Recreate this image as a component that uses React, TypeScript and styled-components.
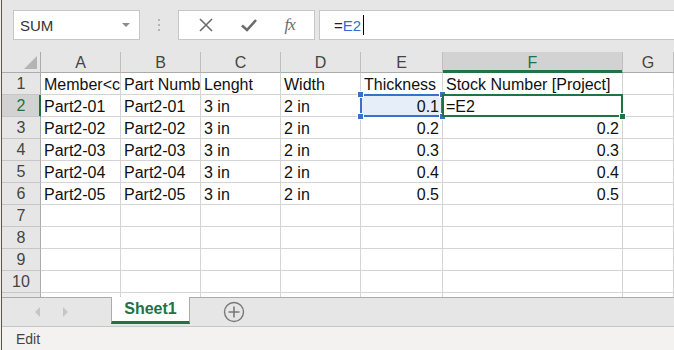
import styled, { createGlobalStyle } from "styled-components";

const GlobalStyle = createGlobalStyle`
  html, body {
    margin: 0;
    padding: 0;
    background: #e6e6e6;
  }
  body {
    font-family: "Liberation Sans", Arial, sans-serif;
  }
`;

const green = "#217346";
const blue = "#3871c9";

const StyledPage = styled.div`
  width: 674px;
  height: 350px;
  overflow: hidden;
  display: flex;
  flex-direction: column;
  background: #e6e6e6;
  border-left: 1px solid #f0f0f0;
  box-sizing: border-box;
`;
const StyledFrame = styled.div`
  flex: 1;
  display: flex;
  flex-direction: column;
  border-left: 1px solid ${green};
  min-height: 0;
`;
const StyledToolbar = styled.div`
  height: 52px;
  flex: none;
  display: flex;
  align-items: flex-start;
  padding: 10px 0 0 11px;
  box-sizing: border-box;
`;
const StyledNameBox = styled.div`
  width: 127px;
  height: 30px;
  box-sizing: border-box;
  background: #fff;
  border: 1px solid #c6c6c6;
  display: flex;
  align-items: center;
  justify-content: space-between;
  padding: 0 9px 0 6px;
  font-size: 15px;
  color: #333;
`;
const StyledCaret = styled.span`
  width: 0;
  height: 0;
  border-left: 4px solid transparent;
  border-right: 4px solid transparent;
  border-top: 4px solid #8a8a8a;
`;
const StyledDots = styled.div`
  width: 38px;
  height: 30px;
  display: flex;
  flex-direction: column;
  align-items: center;
  justify-content: center;
  gap: 3px;
  span {
    width: 2px;
    height: 2px;
    background: #b4b4b4;
  }
`;
const StyledButtons = styled.div`
  width: 137px;
  height: 30px;
  box-sizing: border-box;
  background: #fff;
  border: 1px solid #c6c6c6;
  display: flex;
  align-items: center;
  justify-content: space-around;
  padding: 0 6px;
`;
const StyledFx = styled.span`
  font-family: "Liberation Serif", "Times New Roman", serif;
  font-style: italic;
  font-size: 17px;
  color: #6b6b6b;
  letter-spacing: -1px;
`;
const StyledFormula = styled.div`
  flex: 1;
  height: 30px;
  margin-left: 4px;
  box-sizing: border-box;
  background: #fff;
  border-top: 1px solid #c6c6c6;
  border-bottom: 1px solid #c6c6c6;
  border-left: 1px solid #c6c6c6;
  display: flex;
  align-items: center;
  padding-left: 14px;
  font-size: 15px;
  color: #222;
`;
const StyledRef = styled.span`
  color: #2e6fd0;
`;
const StyledCursor = styled.span`
  display: inline-block;
  width: 1px;
  height: 20px;
  margin-left: 2px;
  background: #000;
`;
const StyledGrid = styled.div`
  flex: 1;
  min-height: 0;
  overflow: hidden;
  display: grid;
  grid-template-columns: 39px 80px 80px 80px 80px 82px 180px 1fr;
  grid-template-rows: 21px repeat(11, 22px);
  background: #fff;
  font-size: 16px;
`;
const StyledCorner = styled.div`
  background: #e6e6e6;
  border-right: 1px solid #ababab;
  border-bottom: 1px solid #ababab;
  position: relative;
  &::after {
    content: "";
    position: absolute;
    right: 3px;
    bottom: 3px;
    width: 0;
    height: 0;
    border-left: 13px solid transparent;
    border-bottom: 13px solid #b4b4b4;
  }
`;
const StyledColHead = styled.div<{ $active?: boolean }>`
  background: ${(p) => (p.$active ? "#d2d2d2" : "#e6e6e6")};
  color: ${(p) => (p.$active ? green : "#444")};
  border-right: 1px solid #bfbfbf;
  border-bottom: 1px solid ${(p) => (p.$active ? green : "#ababab")};
  box-shadow: ${(p) => (p.$active ? `inset 0 -2px 0 ${green}` : "none")};
  display: flex;
  align-items: center;
  justify-content: center;
  padding-top: 1px;
  box-sizing: border-box;
`;
const StyledRowHead = styled.div<{ $active?: boolean }>`
  background: ${(p) => (p.$active ? "#d2d2d2" : "#e6e6e6")};
  color: ${(p) => (p.$active ? green : "#444")};
  border-right: 1px solid ${(p) => (p.$active ? green : "#ababab")};
  box-shadow: ${(p) => (p.$active ? `inset -1px 0 0 ${green}` : "none")};
  border-bottom: 1px solid #c6c6c6;
  display: flex;
  align-items: center;
  justify-content: center;
  padding-top: 1px;
  box-sizing: border-box;
`;
const StyledCell = styled.div<{ $right?: boolean; $ref?: boolean }>`
  position: relative;
  background: ${(p) => (p.$ref ? "#e6eef9" : "#fff")};
  color: #111;
  border-right: 1px solid #d4d4d4;
  border-bottom: 1px solid #d4d4d4;
  padding: 2px 3px 0 3px;
  line-height: 19px;
  white-space: nowrap;
  overflow: hidden;
  text-align: ${(p) => (p.$right ? "right" : "left")};
  box-sizing: border-box;
`;
const StyledBox = styled.div<{ $color: string }>`
  position: absolute;
  left: -1px;
  top: -1px;
  right: -1px;
  bottom: -1px;
  border: 2px solid ${(p) => p.$color};
  pointer-events: none;
`;
const StyledOverlayCell = styled(StyledCell)`
  overflow: visible;
  z-index: 2;
`;
const StyledHandle = styled.span<{ $x: "l" | "r"; $y: "t" | "b"; $color: string }>`
  position: absolute;
  width: 5px;
  height: 5px;
  background: ${(p) => p.$color};
  border: 1px solid #fff;
  ${(p) => (p.$x === "l" ? "left: -4px;" : "right: -4px;")}
  ${(p) => (p.$y === "t" ? "top: -4px;" : "bottom: -4px;")}
`;
const StyledTabBar = styled.div`
  height: 30px;
  flex: none;
  box-sizing: border-box;
  border-top: 1px solid #ababab;
  border-bottom: 1px solid #c6c6c6;
  background: #e6e6e6;
  display: flex;
  align-items: stretch;
  padding-left: 33px;
`;
const StyledNav = styled.div`
  width: 76px;
  display: flex;
  align-items: center;
  gap: 23px;
`;
const StyledArrow = styled.span<{ $dir: "l" | "r" }>`
  width: 0;
  height: 0;
  border-top: 5px solid transparent;
  border-bottom: 5px solid transparent;
  ${(p) =>
    p.$dir === "l"
      ? "border-right: 5px solid #c6c6c6;"
      : "border-left: 5px solid #c6c6c6;"}
`;
const StyledSheetTab = styled.div`
  width: 79px;
  margin-top: -1px;
  box-sizing: border-box;
  background: #fff;
  border-left: 1px solid #ababab;
  border-right: 1px solid #ababab;
  border-bottom: 3px solid ${green};
  margin-bottom: 2px;
  color: ${green};
  font-weight: bold;
  font-size: 16px;
  display: flex;
  align-items: center;
  justify-content: center;
`;
const StyledAdd = styled.div`
  margin-left: 33px;
  display: flex;
  align-items: center;
`;
const StyledStatus = styled.div`
  height: 23px;
  flex: none;
  background: #f3f2f1;
  color: #444;
  font-size: 14px;
  display: flex;
  align-items: center;
  padding-left: 14px;
`;

const columns = ["A", "B", "C", "D", "E", "F", "G"];
const rows: string[][] = [
  ["Member<c", "Part Numb", "Lenght", "Width", "Thickness", "Stock Number [Project]"],
  ["Part2-01", "Part2-01", "3 in", "2 in", "0.1", "=E2"],
  ["Part2-02", "Part2-02", "3 in", "2 in", "0.2", "0.2"],
  ["Part2-03", "Part2-03", "3 in", "2 in", "0.3", "0.3"],
  ["Part2-04", "Part2-04", "3 in", "2 in", "0.4", "0.4"],
  ["Part2-05", "Part2-05", "3 in", "2 in", "0.5", "0.5"],
];

export default function App() {
  const allRows = [...rows, [], [], [], [], [], []];
  return (
    <>
      <GlobalStyle />
      <StyledPage>
        <StyledFrame>
          <StyledToolbar>
            <StyledNameBox>
              SUM
              <StyledCaret />
            </StyledNameBox>
            <StyledDots>
              <span />
              <span />
              <span />
            </StyledDots>
            <StyledButtons>
              <svg width="16" height="16" viewBox="0 0 16 16">
                <path d="M2 2 L14 14 M14 2 L2 14" stroke="#6b6b6b" strokeWidth="1.6" fill="none" />
              </svg>
              <svg width="18" height="16" viewBox="0 0 18 16">
                <path d="M2 8.5 L7 13 L16 3" stroke="#6b6b6b" strokeWidth="2.6" fill="none" />
              </svg>
              <StyledFx>fx</StyledFx>
            </StyledButtons>
            <StyledFormula>
              =<StyledRef>E2</StyledRef>
              <StyledCursor />
            </StyledFormula>
          </StyledToolbar>
          <StyledGrid>
            <StyledCorner />
            {columns.map((c) => (
              <StyledColHead key={c} $active={c === "F"}>
                {c}
              </StyledColHead>
            ))}
            {allRows.flatMap((r, i) => {
              const n = i + 1;
              const cells = [
                <StyledRowHead key={`h${n}`} $active={n === 2}>
                  {n <= 10 ? n : ""}
                </StyledRowHead>,
              ];
              for (let c = 0; c < 7; c++) {
                const v = r[c] ?? "";
                const key = `${n}-${c}`;
                const numeric = i > 0 && (c === 4 || (c === 5 && i > 1));
                if (n === 2 && c === 4) {
                  cells.push(
                    <StyledOverlayCell key={key} $right $ref>
                      {v}
                      <StyledBox $color={blue} />
                      <StyledHandle $x="l" $y="t" $color={blue} />
                      <StyledHandle $x="r" $y="t" $color={blue} />
                      <StyledHandle $x="l" $y="b" $color={blue} />
                      <StyledHandle $x="r" $y="b" $color={blue} />
                    </StyledOverlayCell>
                  );
                } else if (n === 2 && c === 5) {
                  cells.push(
                    <StyledOverlayCell key={key}>
                      {v}
                      <StyledBox $color={green} />
                      <StyledHandle $x="r" $y="b" $color={green} />
                    </StyledOverlayCell>
                  );
                } else {
                  cells.push(
                    <StyledCell key={key} $right={numeric}>
                      {v}
                    </StyledCell>
                  );
                }
              }
              return cells;
            })}
          </StyledGrid>
          <StyledTabBar>
            <StyledNav>
              <StyledArrow $dir="l" />
              <StyledArrow $dir="r" />
            </StyledNav>
            <StyledSheetTab>Sheet1</StyledSheetTab>
            <StyledAdd>
              <svg width="22" height="22" viewBox="0 0 22 22">
                <circle cx="11" cy="11" r="9.5" stroke="#7a7a7a" strokeWidth="1.4" fill="none" />
                <path d="M11 5.5 V16.5 M5.5 11 H16.5" stroke="#7a7a7a" strokeWidth="1.6" />
              </svg>
            </StyledAdd>
          </StyledTabBar>
          <StyledStatus>Edit</StyledStatus>
        </StyledFrame>
      </StyledPage>
    </>
  );
}
